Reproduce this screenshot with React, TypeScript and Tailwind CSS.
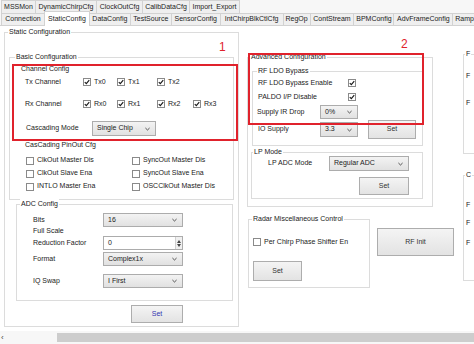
import React from "react";

const row1Tabs: [string, string][] = [
  ["MSSMon", "w-[35px]"],
  ["DynamicChirpCfg", "w-[62px]"],
  ["ClockOutCfg", "w-[47px]"],
  ["CalibDataCfg", "w-[48px]"],
  ["Import_Export", "w-[51px]"],
];

const row2Tabs: [string, string][] = [
  ["Connection", "w-[44px]"],
  ["StaticConfig", "w-[46px]"],
  ["DataConfig", "w-[42px]"],
  ["TestSource", "w-[42px]"],
  ["SensorConfig", "w-[50px]"],
  ["IntChirpBlkCtlCfg", "w-[64px]"],
  ["RegOp", "w-[28px]"],
  ["ContStream", "w-[45px]"],
  ["BPMConfig", "w-[41px]"],
  ["AdvFrameConfig", "w-[60px]"],
];

function Check({ checked }: { checked?: boolean }) {
  return (
    <span className="w-[8px] h-[8px] border border-[#8a8a8a] bg-white flex items-center justify-center shrink-0">
      {checked && (
        <svg viewBox="0 0 8 8" className="w-[6px] h-[6px]">
          <path d="M1 4.2 L3.1 6.3 L7 1.5" stroke="#1a1a1a" strokeWidth="1.5" fill="none" />
        </svg>
      )}
    </span>
  );
}

function Chevron() {
  return (
    <svg viewBox="0 0 6 4" className="w-[5px] h-[4px] shrink-0">
      <path d="M0.5 0.8 L3 3.2 L5.5 0.8" stroke="#333" strokeWidth="1" fill="none" />
    </svg>
  );
}

function Select({ value, className }: { value: string; className: string }) {
  return (
    <div
      className={`flex items-center justify-between border border-[#acacac] bg-linear-to-b from-[#f3f3f3] to-[#e1e1e1] pl-[4px] pr-[5px] shrink-0 ${className}`}
    >
      <span>{value}</span>
      <Chevron />
    </div>
  );
}

function Button({ label, className, blue }: { label: string; className: string; blue?: boolean }) {
  return (
    <div
      className={`flex items-center justify-center border border-[#adadad] bg-linear-to-b from-[#f4f4f4] to-[#e3e3e3] shrink-0 ${
        blue ? "text-[#3535b0]" : "text-[#333]"
      } ${className}`}
    >
      {label}
    </div>
  );
}

function Group({
  label,
  labelLeft,
  className,
  children,
}: {
  label: string;
  labelLeft: string;
  className: string;
  children?: React.ReactNode;
}) {
  return (
    <div className={`relative border border-[#dcdcdc] shrink-0 flex flex-col ${className}`}>
      <span className={`absolute -top-[6px] bg-white px-[1px] leading-[10px] whitespace-nowrap ${labelLeft}`}>
        {label}
      </span>
      {children}
    </div>
  );
}

function CheckItem({ label, checked, className }: { label: string; checked?: boolean; className: string }) {
  return (
    <div className={`flex items-center gap-[3px] shrink-0 ${className}`}>
      <Check checked={checked} />
      <span>{label}</span>
    </div>
  );
}

export default function App() {
  return (
    <div className="relative w-[474px] h-[344px] overflow-hidden bg-white text-[#222] text-[7px] font-['Liberation_Sans',Arial,sans-serif] flex flex-col">
      {/* tab strip */}
      <div className="h-[13px] flex pl-[1px] bg-[#f7f7f7] shrink-0">
        {row1Tabs.map(([t, w]) => (
          <div
            key={t}
            className={`h-[13px] -ml-px first:ml-0 border border-b-0 border-[#d2d2d2] bg-[#efefef] flex items-center justify-center whitespace-nowrap ${w}`}
          >
            {t}
          </div>
        ))}
      </div>
      <div className="h-[13px] flex items-end pl-[1px] border-b border-[#d2d2d2] bg-[#f7f7f7] shrink-0">
        {row2Tabs.map(([t, w]) =>
          t === "StaticConfig" ? (
            <div
              key={t}
              className={`relative z-10 h-[15px] -mb-px -ml-px border border-b-0 border-[#d2d2d2] bg-white flex items-center justify-center whitespace-nowrap ${w}`}
            >
              {t}
            </div>
          ) : (
            <div
              key={t}
              className={`h-[12px] -ml-px first:ml-0 border border-b-0 border-[#d2d2d2] bg-[#efefef] flex items-center justify-center whitespace-nowrap ${w}`}
            >
              {t}
            </div>
          )
        )}
        <div className="h-[12px] -ml-px flex-1 border border-b-0 border-r-0 border-[#d2d2d2] bg-[#efefef] flex items-center pl-[2px]">
          Ramp
        </div>
      </div>

      {/* content */}
      <div className="h-[305px] flex items-start shrink-0">
        {/* static configuration */}
        <Group label="Static Configuration" labelLeft="left-[3px]" className="ml-[4px] mt-[6px] w-[235px] h-[295px]">
          <Group label="Basic Configuration" labelLeft="left-[5px]" className="ml-[4px] mt-[24px] w-[225px] h-[143px]">
            <div className="mt-[6px] h-[10px] leading-[10px] ml-[11px]">Channel Config</div>
            <div className="mt-[2px] h-[12px] flex items-center">
              <span className="ml-[15px] w-[58px] shrink-0">Tx Channel</span>
              <CheckItem label="Tx0" checked className="w-[34px]" />
              <CheckItem label="Tx1" checked className="w-[40px]" />
              <CheckItem label="Tx2" checked className="w-[36px]" />
            </div>
            <div className="mt-[10px] h-[12px] flex items-center">
              <span className="ml-[15px] w-[58px] shrink-0">Rx Channel</span>
              <CheckItem label="Rx0" checked className="w-[34px]" />
              <CheckItem label="Rx1" checked className="w-[40px]" />
              <CheckItem label="Rx2" checked className="w-[36px]" />
              <CheckItem label="Rx3" checked className="w-[30px]" />
            </div>
            <div className="mt-[11px] h-[15px] flex items-center">
              <span className="ml-[16px] w-[66px] shrink-0">Cascading Mode</span>
              <Select value="Single Chip" className="w-[64px] h-[15px]" />
            </div>
            <div className="mt-[4px] h-[10px] leading-[10px] ml-[15px]">CasCading PinOut Cfg</div>
            <div className="mt-[4px] h-[13px] flex items-center">
              <CheckItem label="ClkOut Master Dis" className="ml-[16px] w-[106px]" />
              <CheckItem label="SyncOut Master Dis" className="w-[90px]" />
            </div>
            <div className="h-[13px] flex items-center">
              <CheckItem label="ClkOut Slave Ena" className="ml-[16px] w-[106px]" />
              <CheckItem label="SyncOut Slave Ena" className="w-[90px]" />
            </div>
            <div className="h-[13px] flex items-center">
              <CheckItem label="INTLO Master Ena" className="ml-[16px] w-[106px]" />
              <CheckItem label="OSCClkOut Master Dis" className="w-[90px]" />
            </div>
          </Group>

          <Group label="ADC Config" labelLeft="left-[3px]" className="ml-[11px] mt-[4px] w-[217px] h-[97px]">
            <div className="mt-[8px] h-[14px] flex items-center">
              <span className="ml-[16px] w-[70px] shrink-0">Bits</span>
              <Select value="16" className="w-[80px] h-[14px]" />
            </div>
            <div className="h-[24px] flex items-start">
              <span className="ml-[16px] w-[70px] shrink-0 -mt-[2px] leading-[12px]">
                Full Scale
                <br />
                Reduction Factor
              </span>
              <div className="mt-[9px] w-[80px] h-[14px] border border-[#acacac] bg-white flex items-center justify-between pl-[4px] shrink-0">
                <span>0</span>
                <div className="w-[7px] h-full border-l border-[#d0d0d0] bg-[#f0f0f0] flex flex-col items-center justify-center gap-[1px]">
                  <svg viewBox="0 0 4 3" className="w-[4px] h-[3px]">
                    <path d="M0 3 L2 0 L4 3 Z" fill="#444" />
                  </svg>
                  <svg viewBox="0 0 4 3" className="w-[4px] h-[3px]">
                    <path d="M0 0 L2 3 L4 0 Z" fill="#444" />
                  </svg>
                </div>
              </div>
            </div>
            <div className="mt-[1px] h-[14px] flex items-center">
              <span className="ml-[16px] w-[70px] shrink-0">Format</span>
              <Select value="Complex1x" className="w-[80px] h-[14px]" />
            </div>
            <div className="mt-[8px] h-[14px] flex items-center">
              <span className="ml-[16px] w-[70px] shrink-0">IQ Swap</span>
              <Select value="I First" className="w-[80px] h-[14px]" />
            </div>
          </Group>

          <Button label="Set" blue className="ml-[126px] mt-[4px] w-[52px] h-[18px]" />
        </Group>

        {/* middle column */}
        <div className="ml-[8px] w-[207px] shrink-0 flex flex-col">
          <Group label="Advanced Configuration" labelLeft="left-[2px]" className="mt-[31px] w-[186px] h-[150px]">
            <Group label="RF LDO Bypass" labelLeft="left-[4px]" className="ml-[4px] mt-[13px] w-[171px] h-[75px]">
              <div className="mt-[5px] h-[12px] flex items-center">
                <span className="ml-[5px] w-[90px] shrink-0">RF LDO Bypass Enable</span>
                <Check checked />
              </div>
              <div className="mt-[2px] h-[12px] flex items-center">
                <span className="ml-[5px] w-[90px] shrink-0">PALDO I/P Disable</span>
                <Check checked />
              </div>
              <div className="mt-[2px] h-[14px] flex items-center">
                <span className="ml-[4px] w-[63px] shrink-0">Supply IR Drop</span>
                <Select value="0%" className="w-[38px] h-[14px]" />
              </div>
              <div className="mt-[1px] h-[19px] flex items-center">
                <span className="ml-[5px] w-[62px] shrink-0">IO Supply</span>
                <Select value="3.3" className="w-[38px] h-[15px]" />
                <Button label="Set" className="ml-[10px] w-[48px] h-[19px]" />
              </div>
            </Group>
            <Group label="LP Mode" labelLeft="left-[1px]" className="ml-[3px] mt-[6px] w-[172px] h-[47px]">
              <div className="mt-[3px] h-[15px] flex items-center">
                <span className="ml-[16px] w-[61px] shrink-0">LP ADC Mode</span>
                <Select value="Regular ADC" className="w-[80px] h-[15px]" />
              </div>
              <Button label="Set" className="ml-[107px] mt-[6px] w-[50px] h-[18px]" />
            </Group>
          </Group>

          <div className="mt-[12px] flex items-start">
            <Group label="Radar Miscellaneous Control" labelLeft="left-[3px]" className="ml-[1px] w-[122px] h-[69px]">
              <div className="mt-[16px] h-[12px] flex items-center">
                <CheckItem label="Per Chirp Phase Shifter En" className="ml-[4px]" />
              </div>
              <Button label="Set" className="ml-[4px] mt-[13px] w-[49px] h-[20px]" />
            </Group>
            <Button label="RF Init" className="ml-[7px] mt-[9px] w-[77px] h-[28px]" />
          </div>
        </div>

        {/* right column, cut off */}
        <div className="ml-[9px] w-[30px] shrink-0 flex flex-col">
          <Group label="F" labelLeft="left-[1px]" className="mt-[28px] w-[30px] h-[100px]">
            <div className="mt-[16px] h-[10px] leading-[10px] ml-[2px]">F</div>
            <div className="mt-[17px] h-[10px] leading-[10px] ml-[2px]">F</div>
          </Group>
          <Group label="C" labelLeft="left-[1px]" className="mt-[21px] w-[30px] h-[106px]">
            <div className="mt-[24px] h-[10px] leading-[10px] ml-[2px]">F</div>
            <div className="mt-[8px] h-[10px] leading-[10px] ml-[2px]">F</div>
            <div className="mt-[10px] h-[10px] leading-[10px] ml-[2px]">F</div>
          </Group>
        </div>
      </div>

      {/* horizontal scrollbar */}
      <div className="h-[13px] flex items-center bg-[#f7f7f7] shrink-0">
        <span className="w-[8px] pl-[1px] text-[8px] leading-[8px] text-[#444]">‹</span>
        <div className="w-[49px] h-[9px]" />
        <div className="flex-1 h-[9px] bg-[#cdcdcd]" />
      </div>

      {/* annotations */}
      <div className="absolute left-[12px] top-[64px] w-[226px] h-[77px] border-2 border-[#e0222c]" />
      <div className="absolute left-[248px] top-[53px] w-[176px] h-[72px] border-2 border-[#e0222c]" />
      <span className="absolute left-[219px] top-[40px] text-[12px] leading-[14px] text-[#e0222c]">1</span>
      <span className="absolute left-[401px] top-[37px] text-[12px] leading-[14px] text-[#e0222c]">2</span>
    </div>
  );
}
